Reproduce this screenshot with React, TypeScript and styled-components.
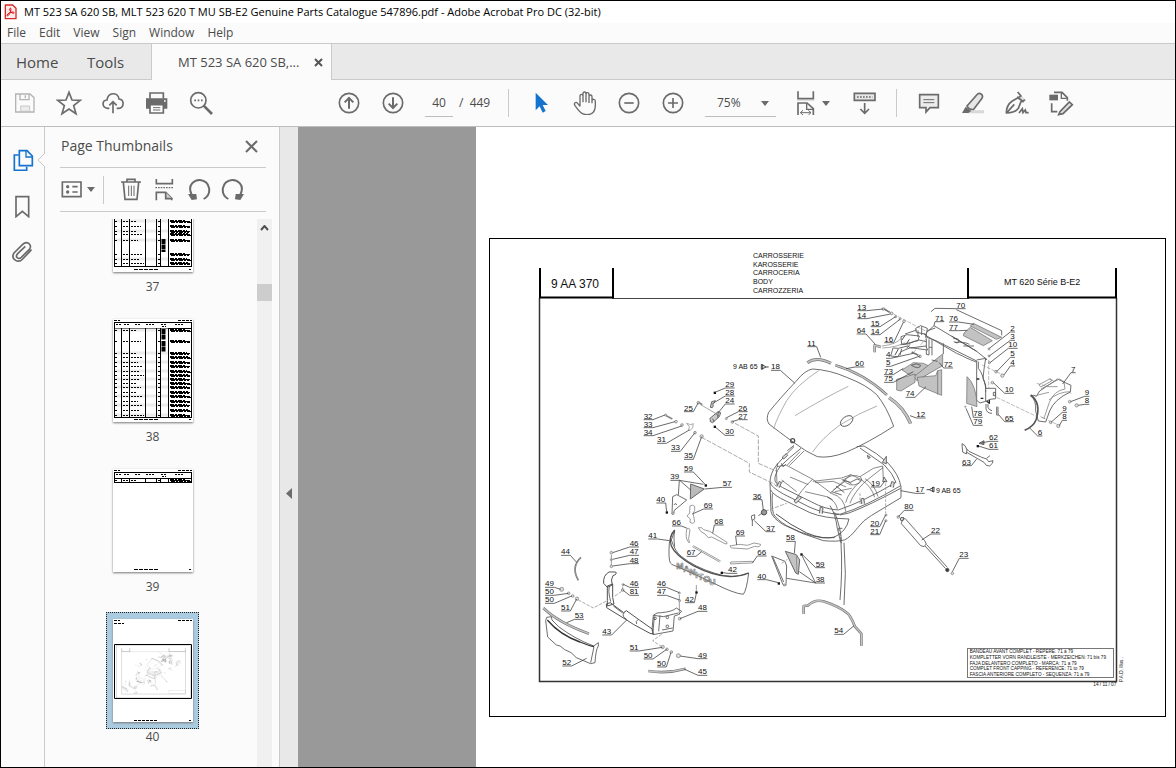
import React from 'react';
import styled, { createGlobalStyle } from 'styled-components';

const INK = '#6b6b6b';
const LINE = '#cacaca';
const PAPER = '#fbfbfb';

const GlobalStyle = createGlobalStyle`
  * { box-sizing: border-box; }
  body { margin: 0; background: ${PAPER}; }
  body, button, input, select { font-family: "Open Sans", "Noto Sans", sans-serif; }
  button { border: 0; padding: 0; background: none; color: inherit; }
  svg { display: block; }
`;

/* ---------- window chrome ---------- */

const Window = styled.div`
  height: 100vh;
  display: flex;
  flex-direction: column;
  border: 1px solid #000;
  background: ${PAPER};
  color: #4b4b4b;
  overflow: hidden;
`;

const TitleBar = styled.header`
  flex: none;
  display: flex;
  align-items: center;
  gap: 7px;
  height: 22px;
  padding-left: 3px;
  background: #fff;
`;

const Title = styled.h1`
  margin: 0;
  font-size: 11px;
  line-height: 20px;
  font-weight: 400;
  color: #000;
  white-space: nowrap;
`;

const MenuBar = styled.nav`
  flex: none;
  display: flex;
  align-items: center;
  gap: 13px;
  height: 21px;
  padding-left: 6px;
  border-bottom: 1px solid ${LINE};
`;

const MenuItem = styled.button`
  font-size: 12px;
  line-height: 18px;
`;

const TabBar = styled.div`
  flex: none;
  display: flex;
  height: 36px;
  background: #e9e9e9;
`;

const Tab = styled.button<{ $width: number }>`
  width: ${(p) => p.$width}px;
  font-size: 15px;
  line-height: 20px;
  text-align: left;
`;

const ActiveTab = styled.div`
  display: flex;
  align-items: center;
  justify-content: space-between;
  width: 181px;
  padding: 0 8px 0 26px;
  border: solid ${LINE};
  border-width: 0 1px;
  background: ${PAPER};
  font-size: 13px;
  line-height: 20px;
`;

const TabFill = styled.div`
  flex: 1;
  border-bottom: 1px solid ${LINE};
`;

const HomeTabs = styled.div`
  display: flex;
  width: 150px;
  padding-left: 15px;
  border-bottom: 1px solid ${LINE};
`;

const ToolBar = styled.div`
  flex: none;
  display: flex;
  align-items: center;
  height: 47px;
  padding-left: 2px;
  border-bottom: 1px solid #bdbdbd;
`;

const ToolGroup = styled.div<{ $before?: number }>`
  display: flex;
  align-items: center;
  margin-left: ${(p) => p.$before ?? 0}px;
`;

const ToolButton = styled.button<{ $width?: number }>`
  display: flex;
  align-items: center;
  justify-content: center;
  gap: 4px;
  width: ${(p) => p.$width ?? 44}px;
  height: 36px;
`;

const Separator = styled.span<{ $height?: number }>`
  width: 1px;
  height: ${(p) => p.$height ?? 28}px;
  background: ${LINE};
`;

const PageInput = styled.input`
  width: 28px;
  height: 28px;
  padding: 0;
  border: 0;
  border-bottom: 1px solid #bdbdbd;
  background: none;
  color: #4b4b4b;
  font-size: 12px;
  text-align: center;
`;

const PageTotal = styled.span`
  width: 55px;
  padding-left: 6px;
  font-size: 12px;
  line-height: 18px;
  white-space: pre;
`;

const ZoomBox = styled.div`
  position: relative;
  width: 71px;
  svg { position: absolute; right: 7px; top: 12px; pointer-events: none; }
`;

const ZoomSelect = styled.select`
  appearance: none;
  width: 100%;
  height: 28px;
  padding: 0 0 0 12px;
  border: 0;
  border-bottom: 1px solid #bdbdbd;
  border-radius: 0;
  background: none;
  color: #4b4b4b;
  font-size: 12px;
`;

/* ---------- side panel ---------- */

const Workspace = styled.div`
  flex: 1;
  min-height: 0;
  display: flex;
`;

const Rail = styled.nav`
  flex: none;
  width: 44px;
  display: flex;
  flex-direction: column;
  align-items: center;
  gap: 10px;
  padding-top: 15px;
  border-right: 1px solid ${LINE};
`;

const RailButton = styled.button`
  position: relative;
  display: flex;
  align-items: center;
  justify-content: center;
  width: 43px;
  height: 36px;
`;

const RailPointer = styled.svg`
  position: absolute;
  right: -1px;
  top: 8px;
`;

const Panel = styled.aside`
  flex: none;
  width: 235px;
  display: flex;
  flex-direction: column;
  padding-left: 15px;
  border-right: 1px solid ${LINE};
`;

const PanelHead = styled.div`
  display: flex;
  align-items: center;
  justify-content: space-between;
  height: 41px;
  margin-right: 13px;
  padding: 0 8px 2px 1px;
  border-bottom: 1px solid ${LINE};
`;

const PanelTitle = styled.h2`
  margin: 0;
  font-size: 14px;
  line-height: 20px;
  font-weight: 400;
`;

const PanelTools = styled.div`
  display: flex;
  align-items: center;
  height: 44px;
  margin-right: 13px;
  border-bottom: 1px solid ${LINE};
`;

const ThumbArea = styled.div`
  flex: 1;
  min-height: 0;
  display: flex;
  justify-content: space-between;
  margin-top: 7px;
  padding-right: 7px;
`;

const ThumbClip = styled.div`
  flex: 1;
  overflow: hidden;
`;

const ThumbList = styled.ol`
  list-style: none;
  margin: -57px 0 0;
  padding: 0 0 0 46px;
`;

const ThumbItem = styled.li`
  width: 93px;
  height: 150px;
  font-size: 12px;
  line-height: 16px;
  text-align: center;
`;

const ThumbFrame = styled.div<{ $selected: boolean }>`
  height: 117px;
  padding: 6px;
  border: 1px dotted ${(p) => (p.$selected ? '#222' : 'transparent')};
  background: ${(p) => (p.$selected ? '#abcbe0' : 'transparent')};
  > svg { background: #fff; box-shadow: 0 1px 2px #777; }
`;

const ScrollBar = styled.div`
  width: 15px;
  background: #f0f0f0;
`;

const ScrollArrow = styled.div`
  display: flex;
  justify-content: center;
  padding-top: 6px;
  height: 65px;
`;

const ScrollThumb = styled.div`
  height: 17px;
  background: #cdcdcd;
`;

const Collapse = styled.button`
  flex: none;
  display: flex;
  align-items: center;
  justify-content: center;
  width: 18px;
  padding-top: 92px;
  background: #e8e8e8;
`;

/* ---------- document ---------- */

const DocumentView = styled.main`
  flex: 1;
  min-width: 0;
  padding-left: 178px;
  background: #999;
  overflow: hidden;
`;

const Sheet = styled.div`
  height: 100%;
  padding: 111px 0 0 13px;
  background: #fff;
  overflow: hidden;
`;

/* ---------- icons (66-unit grid, three units to the pixel) ---------- */

type IconProps = { size?: number; color?: string; w?: number; children: React.ReactNode };
const Icon = ({ size = 22, color = INK, w = 5, children }: IconProps) => (
  <svg width={size} height={size} viewBox={`0 0 ${size * 3} ${size * 3}`} fill="none" stroke={color} strokeWidth={w} aria-hidden="true">
    {children}
  </svg>
);

const Caret = () => (
  <svg width="8" height="5" viewBox="0 0 8 5" aria-hidden="true"><path d="M0 0h8L4 5z" fill={INK} /></svg>
);

const AcrobatLogo = () => (
  <svg width="13" height="16" viewBox="0 0 39 48" fill="none" aria-hidden="true">
    <path d="M4 3h22l10 10v31H4z" fill="#fdecec" stroke="#d32a2a" strokeWidth="4" strokeLinejoin="round" />
    <path d="M9 34c3-7 9-10 19-10 3 1 3 4 0 4-6-1-11-6-11-13 1-4 4-3 4 0 0 8-5 19-11 21z" stroke="#d11" strokeWidth="3" />
  </svg>
);

const SaveIcon = () => (
  <Icon color="#b4b4b4" w={4}>
    <path d="M5 6h43l12 11v43H5z" /><path d="M18 6v17h27V6" /><path d="M34 10v9" />
    <path d="M20 58V42h27v16z" fill="#ececec" strokeWidth="2" />
  </Icon>
);
const StarIcon = () => (
  <Icon size={26} w={5}><path d="M39 7l9 23 25 1-20 16 7 24-21-14-21 14 7-24L5 31l25-1z" /></Icon>
);
const CloudIcon = () => (
  <Icon w={5}>
    <path d="M22 49h-5C-1 47-1 25 15 24 18 0 48-1 51 21c17 2 16 27-1 28h-6" />
    <path d="M33 64V31M22 40l11-11 11 11" />
  </Icon>
);
const PrintIcon = () => (
  <Icon w={4}>
    <path d="M12 20V3h40v17" strokeWidth="5" /><path d="M0 19h64v31h-12V39H12v11H0z" fill={INK} stroke="none" />
    <path d="M12 38h40v25H12z" fill="#fff" strokeWidth="5" /><path d="M21 47h22M21 54h22" strokeWidth="3" /><path d="M54 27h5" stroke="#fff" />
  </Icon>
);
const SearchIcon = () => (
  <Icon size={24} w={5}>
    <circle cx="28" cy="28" r="23" /><path d="M44 44l25 25" strokeWidth="8" />
    <path d="M16 28h5M26 28h5M36 28h5" strokeWidth="5" />
  </Icon>
);
const UpIcon = () => <Icon w={5}><circle cx="33" cy="33" r="29" /><path d="M33 50V19M20 31l13-13 13 13" strokeWidth="6" /></Icon>;
const DownIcon = () => <Icon w={5}><circle cx="33" cy="33" r="29" /><path d="M33 16v31M20 35l13 13 13-13" strokeWidth="6" /></Icon>;
const MinusIcon = () => <Icon w={5}><circle cx="33" cy="33" r="29" /><path d="M19 33h28" strokeWidth="5" /></Icon>;
const PlusIcon = () => <Icon w={5}><circle cx="33" cy="33" r="29" /><path d="M18 33h30M33 18v30" strokeWidth="5" /></Icon>;
const PointerIcon = () => <Icon><path d="M17 2l37 37H38l9 18-9 5-9-19-12 12z" fill="#1473cf" stroke="none" /></Icon>;
const HandIcon = () => (
  <Icon size={24} w={4}>
    <path
      d="M21 46V16c0-8 9-8 9 0v18M30 34V9c0-8 9-8 9 0v25M39 34V11c0-8 9-8 9 0v25M48 36V18c0-8 9-8 9 0v19M57 37v-7c0-7 10-7 10 1v12c0 18-8 28-25 28-18 0-23-10-36-27-5-8 3-13 8-7l7 9"
      strokeLinejoin="round"
    />
  </Icon>
);
const FitIcon = () => (
  <Icon size={24} w={5}>
    <path d="M12 1v22h46V1" /><path d="M9 28h52" strokeWidth="2" stroke="#c8c8c8" />
    <path d="M12 72V36h27l19 17v19" /><path d="M38 36v19h20" strokeWidth="4" />
    <path d="M20 65h30M27 58l-8 7 8 7M43 58l8 7-8 7" strokeWidth="3" />
  </Icon>
);
const KeyboardIcon = () => (
  <Icon size={24} w={5}>
    <path d="M4 7h62v21H4z" fill="#e6e6e6" /><path d="M12 18h46" strokeDasharray="5 4" strokeWidth="5" />
    <path d="M35 36v30M22 54l13 13 13-13" />
  </Icon>
);
const CommentIcon = () => (
  <Icon w={5}>
    <path d="M5 8h56v39H36L24 60V47H5z" fill="#ececec" /><path d="M16 23h33M16 32h33" strokeWidth="3" />
  </Icon>
);
const MarkerIcon = () => (
  <Icon size={24} w={5}>
    <path d="M26 58h43v9H18z" fill="#d8d8d8" stroke="none" />
    <path d="M18 45L47 12c8-10 24 0 15 11L38 55c-10 2-16-2-20-10z" fill="#e6e6e6" />
    <path d="M14 47l17 13-9 6H3z" fill={INK} stroke="none" />
  </Icon>
);
const SignIcon = () => (
  <Icon size={24} w={5}>
    <path d="M43 10l21 17-9 8-17-14z" fill="#dedede" stroke="none" />
    <path d="M38 3l10 12L22 30Q4 42 4 66q26 0 36-14l8-20 12-5M36 18l20 15M6 64l22-24" strokeLinejoin="round" />
    <path d="M42 66l10-13 2 12 7-8 2 8h8" strokeWidth="5" />
  </Icon>
);
const EditIcon = () => (
  <Icon size={26} w={5}>
    <path d="M4 14h26v17H4z" fill={INK} stroke="none" /><path d="M18 7h24l16 16v9" /><path d="M40 9v16h16" strokeWidth="4" />
    <path d="M11 40v25h17" /><path d="M36 65L64 36l9 8-28 27-13 3z" fill="#e0e0e0" strokeWidth="5" />
  </Icon>
);
const PagesIcon = () => (
  <Icon color="#1473cf" w={5}>
    <path d="M22 5h23l16 16v29H22z" /><path d="M42 5v19h18" strokeWidth="4" /><path d="M20 18H7v46h37V53" />
  </Icon>
);
const BookmarkIcon = () => <Icon size={24} w={5}><path d="M15 8h38v60L34 52 15 68z" /></Icon>;
const ClipIcon = () => (
  <Icon size={24} w={5}>
    <path d="M59 32L35 57C21 72-2 57 9 39L35 13C48 0 66 15 55 28L31 52C22 60 11 51 20 41L43 19M58 32l4-3" />
  </Icon>
);
const OptionsIcon = () => (
  <Icon w={5}>
    <path d="M4 9h56v44H4z" /><path d="M34 23h16M34 39h16" /><circle cx="20" cy="23" r="5" fill={INK} stroke="none" /><circle cx="20" cy="39" r="5" fill={INK} stroke="none" />
  </Icon>
);
const TrashIcon = () => (
  <Icon size={24} w={5}><path d="M6 12h60M24 11V4h24v7M13 13l5 51h36l5-51" /><path d="M29 23v31M37 23v31M45 23v31" strokeWidth="3" /></Icon>
);
const SplitIcon = () => (
  <Icon size={24} w={5}><path d="M10 3v14h48V3" /><path d="M7 29h54" strokeWidth="4" strokeDasharray="5 3" /><path d="M10 67V43h28l18 18v6" /><path d="M38 43v19h20" fill="#ccc" /></Icon>
);
const RotateIcon = ({ flip = false }: { flip?: boolean }) => (
  <Icon size={24} w={5}>
    <g transform={flip ? 'translate(72 0) scale(-1 1)' : undefined}>
      <path d="M14 50C-1 20 24 5 39 6c32 4 37 42 11 57" strokeWidth="6" /><path d="M3 48h25l2 16-16 2z" fill={INK} stroke="none" />
    </g>
  </Icon>
);

/* ---------- exploded drawing ---------- */

type Point = [number, number];
type Callout = [string, number, number, ...Point[]];

/* Each sheet zone has its own origin; coordinates inside run at three units to the pixel. */
const zone = (x: number, y: number) => `translate(${x} ${y}) scale(.33333)`;

const CALLOUTS: { at: Point; items: Callout[] }[] = [
  { at: [480, 230], items: [['11', 982, 350, [1022, 382]]] },
  {
    at: [830, 260],
    items: [
      ['13', 82, 152, [160, 147]], ['14', 82, 176, [182, 162]], ['15', 122, 200, [197, 170]], ['14', 122, 224, [210, 178]],
      ['64', 80, 222, [135, 252]], ['16', 163, 248, [220, 187]], ['4', 168, 295, [250, 280]], ['5', 168, 319, [270, 288]],
      ['73', 162, 344, [220, 325]], ['75', 162, 367, [250, 335]], ['74', 227, 412, [288, 380]], ['72', 341, 324, [328, 308]],
      ['71', 315, 185, [312, 197]], ['76', 357, 186, [432, 193]], ['77', 357, 212, [412, 211]],
      ['2', 541, 216, [478, 265]], ['3', 541, 241, [478, 288]], ['10', 535, 265, [480, 308]], ['5', 541, 292, [500, 335]],
      ['4', 541, 318, [522, 345]], ['7', 723, 338, [698, 372]], ['10', 524, 400, [490, 368]], ['9', 764, 409, [722, 425]],
      ['8', 764, 433, [745, 436]], ['9', 697, 457, [663, 487]], ['8', 697, 481, [688, 497]], ['6', 623, 528, [600, 505]],
      ['65', 524, 485, [505, 463]], ['78', 430, 472, [425, 440]], ['79', 430, 496, [408, 445]], ['12', 259, 474, [240, 467]],
      ['60', 75, 321, [48, 326]], ['62', 477, 544, [455, 549]], ['61', 477, 568, [445, 558]], ['63', 396, 617, [440, 597]],
      ['70', 379, 146, [315, 145], [303, 155]],
    ],
  },
  {
    at: [700, 350],
    items: [
      ['18', 213, 61, [285, 100]], ['29', 76, 114, [45, 127]], ['28', 76, 138, [42, 158]], ['24', 76, 162, [55, 188]],
      ['26', 115, 185, [80, 203]], ['27', 115, 209, [97, 215]], ['30', 75, 256, [47, 232]], ['57', 68, 412, [15, 417]],
      ['36', 158, 449, [190, 480]], ['37', 198, 545, [163, 512]], ['58', 258, 574, [283, 610]], ['59', 347, 653, [305, 612]],
      ['38', 347, 699, [298, 665]], ['40', 172, 689, [235, 698]], ['19', 513, 411, [555, 392]], ['17', 646, 430, [602, 422]],
      ['80', 613, 481, [595, 500]], ['20', 511, 530, [557, 495]], ['21', 511, 554, [557, 512]], ['22', 693, 552, [665, 570]],
      ['23', 778, 625, [757, 665]],
    ],
  },
  {
    at: [530, 370],
    items: [
      ['25', 462, 125, [505, 98]], ['32', 341, 149, [405, 135]], ['33', 341, 173, [435, 155]], ['34', 341, 197, [455, 168]],
      ['31', 381, 220, [478, 180]], ['33', 423, 244, [495, 188]], ['35', 462, 268, [515, 200]], ['59', 462, 306, [527, 345]],
      ['39', 421, 331, [482, 360]], ['40', 379, 399, [410, 425]], ['69', 521, 417, [487, 432]], ['66', 426, 468, [472, 475]],
      ['68', 553, 465, [548, 490]], ['41', 355, 507, [418, 512]], ['69', 617, 498, [620, 525]], ['67', 470, 559, [515, 545]],
      ['66', 682, 558, [668, 578]], ['42', 594, 610, [578, 608]],
    ],
  },
  {
    at: [530, 520],
    items: [
      ['44', 93, 106, [140, 127]], ['46', 299, 81, [248, 98]], ['47', 299, 106, [248, 118]], ['48', 299, 131, [248, 138]],
      ['46', 299, 202, [280, 193]], ['81', 299, 226, [278, 210]], ['46', 381, 202, [448, 218]], ['47', 381, 226, [448, 240]],
      ['42', 465, 248, [499, 220]], ['48', 504, 274, [450, 296]], ['49', 45, 202, [92, 208]], ['50', 45, 226, [115, 220]],
      ['50', 45, 250, [125, 228]], ['51', 93, 273, [140, 237]], ['53', 134, 298, [110, 308]], ['43', 217, 345, [290, 300]],
      ['52', 97, 438, [170, 415]], ['51', 299, 393, [397, 382]], ['50', 341, 417, [410, 388]], ['50', 381, 441, [423, 397]],
      ['49', 504, 416, [450, 408]], ['45', 504, 466, [462, 447]],
    ],
  },
  { at: [780, 480], items: [['54', 163, 463, [222, 437]]] },
];

const Callouts = () => (
  <g fontFamily='"Liberation Sans", Arial, sans-serif' fontSize="24" fill="#111">
    {CALLOUTS.map((z, i) => (
      <g key={i} transform={zone(z.at[0], z.at[1])}>
        {z.items.map(([text, x, y, ...to], j) => {
          const width = text.length * 14;
          const start = to[0][0] > x + width / 2 ? x + width : x;
          const other = start === x ? x + width : x;
          return (
            <g key={j}>
              <text x={x} y={y - 3}>{text}</text>
              <polyline points={[[other, y], [start, y], ...to].join(' ')} fill="none" stroke="#444" strokeWidth="2.4" />
            </g>
          );
        })}
      </g>
    ))}
  </g>
);

const Bolt = ({ x, y, r = 5 }: { x: number; y: number; r?: number }) => (
  <g fill="#ddd" stroke="#777" strokeWidth="2"><circle cx={x} cy={y} r={r - 1} /></g>
);
const Dot = ({ x, y }: { x: number; y: number }) => <path d={`M${x - 4} ${y - 3}h7v7h-7z`} fill="#111" stroke="none" />;
const Strip = ({ d, width = 10 }: { d: string; width?: number }) => (
  <g fill="none"><path d={d} stroke="#777" strokeWidth={width} /><path d={d} stroke="#c4c4c4" strokeWidth={width - 4} /></g>
);

const Parts = () => (
  <g fill="none" stroke="#505050" strokeWidth="2.5" strokeLinejoin="round">
    <g transform={zone(700, 350)}>
      {/* bonnet */}
      <path d="M206 187Q240 145 288 94Q315 60 338 57Q390 60 440 82Q500 105 530 134Q560 170 581 229Q505 278 440 306Q390 326 352 320Q320 307 282 278Q230 240 207 222Q197 207 206 187z" fill="#fff" />
      <path d="M356 62Q290 105 260 152Q230 205 221 236M445 109Q380 140 285 197M531 168Q475 190 420 225Q365 265 338 306" stroke="#888" strokeWidth="2" />
      <ellipse cx="440" cy="213" rx="21" ry="13" transform="rotate(-35 440 213)" />
      <circle cx="278" cy="272" r="6" strokeWidth="4" />
      {/* tray */}
      <path d="M282 290Q255 315 230 345Q210 370 210 397Q214 412 250 432L330 472Q370 490 420 493Q500 468 602 407Q597 375 565 340Q530 308 492 288L470 290" />
      <path d="M303 295Q265 325 240 350Q222 375 225 393Q230 405 262 420L335 456Q375 478 415 480Q490 455 588 397Q578 370 553 345L480 294" />
      <path d="M212 420Q220 436 260 454L330 488Q370 505 447 507Q440 545 400 563Q340 570 260 527Q225 505 220 490Q215 470 217 430" />
      <path d="M210 397L213 485Q218 505 250 524Q310 555 370 572Q410 576 433 570Q450 563 474 532Q490 510 515 496L603 443V407" />
      <path d="M228 492Q270 525 320 549Q370 570 405 561" strokeWidth="3" />
      <path d="M420 495L447 489Q510 465 602 415" />
      {/* inner mouldings */}
      <path d="M232 350L258 345L338 388L394 430Q435 442 437 485M338 388Q320 402 292 440L285 455M229 352L231 400M252 393L225 407M315 425L380 440Q410 455 412 478M245 390L290 425M270 381L325 404M300 305L262 345M312 303L268 347" strokeWidth="2" />
      <path d="M338 394L425 384L453 374L487 390M390 430L453 374M400 420L438 392L455 402M480 380L520 355L548 348L550 390M437 458Q445 425 485 390M450 460Q460 430 495 395L550 352M485 390Q515 410 524 442M495 386Q525 405 534 440M430 390Q450 414 477 400Q490 388 480 380Q455 370 430 390M405 425L455 415M345 398L400 394L438 411" strokeWidth="2" />
      <path d="M425 389l26 8 20-10 10 4M382 440l16 10M395 425l30 10M408 408l25 20" />
      <path d="M247 321l12-10 4 5-12 11zM547 337l12-18v22zM502 316l9 6-6 4zM571 411l4-16 8 2-3 16M548 395l4-14 9 14zM358 490l3-20 8 4-2 17M485 462l-2-15 8-2 3 16M282 453l16-14 7 4-17 17zM230 410l8-16 6 4-6 15" fill="#ddd" />
      <path d="M262 302l20-16M244 340l5 10 8-6M232 340v12" />
      {/* stay */}
      <path d="M390 467Q406 490 412 535L423 580Q428 660 420 750M404 487Q424 540 424 573M432 578Q440 670 432 765M408 493h10M415 535h12" />
      <path d="M415 535Q422 560 425 580" strokeDasharray="8 5" />
      {/* gas strut */}
      <path d="M606 513l9-8 59 67 5 10-7 8-10-3-58-66z" fill="#fff" /><path d="M675 588l62 68M680 584l62 68M602 510l10-8" />
      <circle cx="742" cy="660" r="5" fill="#333" /><circle cx="606" cy="507" r="5" fill="#ccc" />
      <Bolt x={595} y={501} /><Bolt x={757} y={670} /><Bolt x={558} y={495} r={4} /><Bolt x={558} y={512} r={4} />
      <path d="M557 400V490M480 430V462" stroke="#999" strokeDasharray="8 4" />
      {/* deflector */}
      <path d="M215 618l40 16 5 14-2 58-9-2zM219 622l32 74" fill="#fff" />
      <path d="M256 604l33 10 10 16-4 43-8-4z" fill="#c4c4c4" /><path d="M289 615l2 56" stroke="#888" />
      <Dot x={305} y={613} /><Dot x={237} y={700} /><Bolt x={253} y={705} r={4} />
      <path d="M305 615L347 699L260 685" strokeWidth="2.4" />
      <path d="M195 484L260 460M245 640L262 628" stroke="#999" strokeDasharray="12 4" />
      <circle cx="192" cy="487" r="8" fill="#999" strokeWidth="3" /><path d="M154 498l10-4v13l-8 4zM157 510v18M175 497l12-8" />
      {/* hinge */}
      <path d="M38 160l2 8-3 5-6-1 4-17 11-3-6 10M30 205l24-20 8 3-4 12-20 18-7-3z" fill="#ccc" />
      <path d="M45 190l12 8M38 206l4 10M55 185l-2 18" />
      <Dot x={45} y={128} /><Dot x={45} y={230} /><Bolt x={79} y={206} r={4} /><Bolt x={97} y={216} />
      <path d="M105 220L175 258V340L228 363M5 262L148 340V366L225 403" stroke="#999" strokeDasharray="14 4" />
      {/* seals */}
      <Strip d="M322 38Q350 18 393 40" width={9} /><Strip d="M406 46Q490 70 561 135" width={8} /><Strip d="M567 143Q610 170 632 221" />
      <path d="M184 43v15l14-7zM188 43v15M198 51h8" stroke="#222" /><path d="M702 411v15l-14-7zM698 411v15M688 419h-8" stroke="#222" />
    </g>

    <g transform={zone(830, 260)}>
      {/* front capping */}
      <path d="M285 222L312 197L440 274L470 298L440 303L318 242L290 232z" fill="#fff" />
      <path d="M292 212l24-8M440 274L365 228M370 236h12l6 8-7 5-10-4M375 247Q405 245 418 253M400 258h32M380 280l18 8q5 4 40 18M290 228L380 280M440 303L470 298M340 250v32M289 235v48l8 2v-47M306 240v46M298 262l8 0" />
      <path d="M257 205l15-8 20 8-3 18-30-6zM213 230l18-6 37 4-4 14-10 2-20 8-19 2zM264 211v20M275 200v25M225 222l35-12M289 245l-22-5-26 8-30 6M182 288l7-24 16 1 28-7 9 6 45-6 6 12-52-7-28 12-10 15zM230 265l10-12M215 266l-5 20" fill="#fff" />
      <path d="M216 240l8-12M230 250l8-12M195 285l10-18M282 222l8 3-4 8" strokeWidth="3" />
      <path d="M440 300l27-5-5 33-3 27 8 20v20M440 303v118l10 8 17-5V390M445 305v20q14 15 23 62M467 385h30v31l-17 2-13 6M490 397l6 0v10h-6z" fill="#fff" />
      <path d="M440 357h8M452 415h8M478 420v10l-8-6" stroke="#222" strokeWidth="4" />
      <path d="M476 300V385M500 412L625 472M456 315L520 345M162 147L290 215M250 278L290 235M620 370L725 400M640 475L690 497" stroke="#999" strokeDasharray="12 4" strokeWidth="2" />
      {/* padded panels */}
      <g fill="#c2c2c2" stroke="#666" strokeWidth="2">
        <path d="M216 330l34-22 30 2 34 16-34 24-36-2z" /><path d="M252 350l86-68v35l-78 45z" /><path d="M200 358l55-16v25l-42 26-13-3z" />
        <path d="M262 352l55-5 6-15 12-3v77l-68-28zM323 332v72" />
        <path d="M430 190l85 42-16 6-78-40zM402 219l19-17 66 40-27 15-60-30z" />
        <path d="M411 350Q440 375 441 440l-31-10z" />
      </g>
      <path d="M244 316q14-9 28 0-4 14-28 0zM305 300l18 4" />
      <path d="M379 149L515 212V226" />
      {/* side fairing */}
      <path d="M602 408q10-5 17 1l10-16 54-36 10 5 30 14-2 20q-48 22-62 57l-12 33-22-3-8-30q2-35-15-45" fill="#fff" />
      <path d="M633 387l55-30 14 8 3 22q-33 5-47 40l-16 48M617 407q25-7 40-10M657 420Q685 395 722 395M650 380l33 0M627 374l34-18 4 7-33 18zM658 357l12 5M632 470l14 7" stroke="#888" />
      <path d="M602 405Q635 430 618 480Q610 500 584 511" stroke="#555" strokeWidth="5" />
      <Strip d="M134 277V256L153 261" width={8} /><path d="M156 258Q200 253 213 235M157 264Q200 262 224 248" stroke="#999" />
      <path d="M500 440v26M504 440v28M468 432v14q2 14 18 14M474 432v10q2 8 12 10" />
      {/* bracket */}
      <path d="M396 551l9 6 6 12-2 13-11-6zM409 566l8 8 38 18 15 5 6 8 13-3-2 8-8 8-10-2-7-9-52-30M470 595l10-8" fill="#fff" />
      <Dot x={444} y={558} /><path d="M447 550l15-8v12z" fill="#999" />
      <Bolt x={160} y={147} /><Bolt x={185} y={160} /><Bolt x={197} y={170} r={4} /><Bolt x={210} y={177} r={4} /><Bolt x={222} y={184} />
      <path d="M163 147l16 10M245 276l20 10" strokeWidth="5" stroke="#777" /><Bolt x={270} y={289} />
      <Bolt x={477} y={267} r={4} /><Bolt x={477} y={288} r={4} /><Bolt x={478} y={308} r={4} /><Bolt x={498} y={335} /><Bolt x={517} y={347} r={6} />
      <Bolt x={487} y={368} /><Bolt x={719} y={425} /><Bolt x={740} y={436} r={6} /><Bolt x={662} y={487} /><Bolt x={685} y={498} r={6} /><Bolt x={406} y={440} r={3} />
    </g>

    <g transform={zone(530, 370)}>
      <Bolt x={407} y={135} r={4} /><path d="M409 137l18 10M505 97l12 7" strokeWidth="5" stroke="#888" /><Bolt x={505} y={98} />
      <Bolt x={438} y={155} /><Bolt x={456} y={165} /><Bolt x={495} y={188} /><Bolt x={515} y={199} r={6} />
      <path d="M470 160l12 4 8-3-2 12-8 9-4-2 2-10zM512 104L570 138" stroke="#999" />
      {/* left deflector */}
      <path d="M426 432l2-52 12-6 30 16-38 32v8zM432 405q2-8 9-1" fill="#fff" /><path d="M482 342l41 15-42 30z" fill="#bbb" />
      <path d="M448 331L445 375M448 331L520 343" /><Dot x={528} y={346} /><Dot x={411} y={427} /><Bolt x={429} y={431} r={4} />
      {/* foam strips */}
      <path d="M480 408q8-6 14 1v13q-9 8-3 16l3 18q-4 8-14 1l1-10-10-9 8-9zM470 478q8-8 10 2l-4 25 2 14-5-6q-7-10-3-35zM505 473q10-3 16 6l18 5 52 33q2 8-6 4l-40-20-10 2-10-11q-14-5-20-19zM490 527l82 46M487 530l82 46M604 527l26-4 22 3 20-7 20 4q0 10-18 6l-22 8-45-3q-6 0-7-7zM602 576l64-2q8 2 0 5l-30 1-34 2z" stroke="#888" />
      {/* grille */}
      <path d="M434 482Q417 495 417 540Q416 580 425 583Q490 610 552 640Q610 670 640 673Q650 660 656 609Q605 628 555 610Q495 592 455 560Q435 545 424 510L434 482" fill="#fff" />
      <path d="M434 480Q415 500 424 528Q435 555 490 587Q550 618 600 620Q630 620 656 609" strokeWidth="4" />
      <path d="M434 484Q430 500 434 530" /><Dot x={576} y={608} />
      <text x="439 460 478 496 504 520 538" y="597 606 615 624 629 637 646" fontFamily='"Liberation Sans", Arial, sans-serif' fontWeight="700" fontSize="26" strokeWidth="2" stroke="#777">MANITOU</text>
    </g>

    <g transform={zone(530, 520)}>
      <path d="M499 195v20" stroke="#888" /><Dot x={500} y={217} /><Strip d="M153 112Q122 140 145 181" width={5} />
      <Bolt x={244} y={98} /><Bolt x={244} y={119} r={4} /><Bolt x={244} y={139} r={5} /><path d="M244 104v32M448 225v60M278 200v10" stroke="#888" />
      <Bolt x={279} y={194} r={4} /><Bolt x={278} y={210} /><Bolt x={448} y={219} r={4} /><Bolt x={449} y={242} r={4} /><Bolt x={449} y={296} r={5} />
      {/* frame */}
      <path d="M221 190q-2-24 16-34l20 0q6 6-8 11-8 12-2 28l-15 7zM232 198l16-6v40l4 20-20 6zM229 252l12-4 40 30 8-6 39 28 40 28 2 14-10-2-50-27-20-13-60-37z" fill="#fff" strokeWidth="3" />
      <path d="M370 286q10-10 24-8 34-3 45-14l16 10-10 10-12 4-4 45-60 11-3-16zM373 290l-4 44M390 286l-4 48M396 330l32-6M250 258l28 21M240 197q-8 10 2 48M283 277q-10 12 8 22M325 298q-10 6-5 14M370 286l30 4 45-11" />
      <circle cx="412" cy="292" r="4" /><circle cx="412" cy="319" r="4" /><circle cx="375" cy="295" r="4" />
      <path d="M145 240L190 264L235 240M395 343L368 362L395 380M255 228L275 214" stroke="#999" strokeDasharray="10 4" />
      <Bolt x={95} y={208} r={7} /><Bolt x={116} y={220} /><Bolt x={128} y={228} /><Bolt x={141} y={236} r={6} />
      <Bolt x={398} y={381} r={6} /><Bolt x={411} y={388} /><Bolt x={424} y={396} /><Bolt x={445} y={407} r={7} />
      {/* bumper */}
      <Strip d="M40 264Q85 308 177 341" width={8} /><Strip d="M355 453Q410 462 467 446" width={8} />
      <path d="M47 302l3-10 14-2 2 10 20 20q45 35 105 58l14-10v10q-8 12-10 50l-13 3-43-18q-14-18-35-24-15-15-25-14l-26-24z" fill="#fff" />
      <path d="M52 300Q90 345 150 366Q180 378 192 380" stroke="#333" strokeWidth="4" /><path d="M192 380l-10 48" />
    </g>

    <g transform={zone(780, 480)}>
      <Strip d="M71 402V378L83 377Q105 357 130 364Q180 380 205 402Q215 415 225 440L244 461V498" width={8} />
    </g>
  </g>
);

const SheetLines = () => (
  <g fill="none" stroke="#111">
    <rect x="489.500" y="238.500" width="676" height="478" stroke="#000" />
    <path d="M539.500 298V681.500H1116.500V298" stroke="#333" strokeWidth="1.500" /><path d="M612 298.500h357" stroke="#444" />
    <path d="M540 268v29.500h73V268M968 268v29.500h148V268" stroke="#000" strokeWidth="2" />
    <rect x="967.500" y="648.500" width="146" height="29" stroke="#777" />
  </g>
);

const HEADINGS = ['CARROSSERIE', 'KAROSSERIE', 'CARROCERIA', 'BODY', 'CARROZZERIA'];
const NOTES = [
  'BANDEAU AVANT COMPLET - REPERE: 71 à 79',
  'KOMPLETTER VORN RANDLEISTE - MERKZEICHEN: 71 bis 79',
  'FAJA DELANTERO COMPLETO - MARCA: 71 a 79',
  'COMPLET FRONT CAPPING - REFERENCE: 71 to 79',
  'FASCIA ANTERIORE COMPLETO - SEQUENZA: 71 a 79',
];

const Drawing = () => (
  <svg width="677" height="479" viewBox="489 238 677 479" role="img" aria-label="Body, exploded view">
    <SheetLines />
    <Parts />
    <Callouts />
    <g fontFamily='"Liberation Sans", Arial, sans-serif' fill="#111">
      <text x="551" y="288" fontSize="12">9 AA 370</text>
      <text x="1004" y="285" fontSize="9">MT 620 Série B-E2</text>
      <g fontSize="7">
        {HEADINGS.map((t, i) => <text key={t} x="753" y={258 + Math.round(i * 8.7)}>{t}</text>)}
        <text x="733" y="369">9 AB 65</text>
        <text x="936" y="493">9 AB 65</text>
      </g>
      <g transform={zone(780, 480)} fontSize="14">
        {NOTES.map((t, i) => <text key={t} x="569" y={520 + i * 17}>{t}</text>)}
        <text x="940" y="619">14 / 11 / 07</text>
        <text transform="translate(1028 606) rotate(-90)">P.A.D.  Illus .</text>
      </g>
    </g>
  </svg>
);

/* ---------- thumbnails ---------- */

const COLUMNS = [9, 17, 33, 44, 48, 56];

const PartsTable = ({ top, bottom, rows, block }: { top: number; bottom: number; rows: number[]; block?: Point[] }) => (
  <g stroke="#000" fill="none">
    <path d="M1 1.500h6M65 1.500h14" strokeDasharray="3 1" />
    <path d="M3 5.500h5M11 5.500h5M22 5.500h6M33 5.500h9M48 5.500h6M62 5.500h8M49 7.500h4" strokeDasharray="2 1" />
    <path d="M1 3.500h78M1 9.500h78" />
    {rows.map((y, i) => (
      <g key={y}>
        {i % 2 === 0 && bottom > 20 && <path d={`M2 ${y}h54`} stroke="#ececec" strokeWidth="3" />}
        <path d={`M2 ${y + 0.5}h2M10 ${y + 0.5}h5M18 ${y + 0.5}h${5 + ((i * 5) % 9)}M45 ${y + 0.5}h2`} strokeDasharray="2 1" />
        <path d={`M57 ${y + 0.5}h20`} />
        <path d={`M57 ${y - 0.5}h${15 + (i % 4)}M58 ${y + 1.5}h${20 - (i % 3)}`} strokeDasharray="4 1 2 1" />
      </g>
    ))}
    {block?.map(([a, b]) => <path key={a} d={`M50.500 ${a}V${b}`} strokeWidth="4" strokeDasharray="5 .5" />)}
    <path d={`M1.500 ${top}V${bottom}M78.500 ${top}V${bottom}M1 ${bottom - 0.5}h78` + COLUMNS.map((x) => `M${x - 0.5} 9V${bottom}`).join('')} />
    <path d="M21 100.500h24M76 100.500h2" strokeDasharray="4 1" />
  </g>
);

const ThumbPage = ({ page }: { page: number }) => (
  <svg width="80" height="103" viewBox="0 0 80 103" role="img" aria-label={`Page ${page}`}>
    {page === 37 && <PartsTable top={3} bottom={98} rows={[52, 57, 62, 65, 71, 85, 90, 94]} block={[[70, 83]]} />}
    {page === 38 && (
      <PartsTable top={3} bottom={99} rows={[11, 22, 34, 38, 43, 47, 52, 56, 60, 64, 68, 73, 77, 82, 86, 91, 96]} block={[[10, 21], [22, 33]]} />
    )}
    {page === 39 && <PartsTable top={3} bottom={14} rows={[11]} />}
    {page === 40 && (
      <>
        <svg x="2" y="26" width="77" height="53" viewBox="489 238 677 479"><SheetLines /><Parts /></svg>
        <path d="M1.500 25.500h77v54h-77z" fill="none" stroke="#000" />
        <path d="M1 1.500h6M65 1.500h14M1 4.500h10M21 101.500h24M76 101.500h2" stroke="#000" strokeDasharray="3 1" />
      </>
    )}
  </svg>
);

const tools: [string, React.ComponentType][][] = [
  [['Save', SaveIcon], ['Star', StarIcon], ['Share', CloudIcon], ['Print', PrintIcon], ['Find', SearchIcon]],
  [['Previous page', UpIcon], ['Next page', DownIcon]],
  [['Select', PointerIcon], ['Pan', HandIcon], ['Zoom out', MinusIcon], ['Zoom in', PlusIcon]],
  [['Comment', CommentIcon], ['Highlight', MarkerIcon], ['Sign', SignIcon], ['Edit', EditIcon]],
];

const Tools = ({ set, before }: { set: number; before?: number }) => (
  <ToolGroup $before={before}>
    {tools[set].map(([label, Glyph]) => (
      <ToolButton key={label} aria-label={label}><Glyph /></ToolButton>
    ))}
  </ToolGroup>
);

export default function App() {
  return (
    <Window>
      <GlobalStyle />
      <TitleBar>
        <AcrobatLogo />
        <Title>MT 523 SA 620 SB, MLT 523 620 T MU SB-E2 Genuine Parts Catalogue 547896.pdf - Adobe Acrobat Pro DC (32-bit)</Title>
      </TitleBar>
      <MenuBar>
        {['File', 'Edit', 'View', 'Sign', 'Window', 'Help'].map((m) => <MenuItem key={m}>{m}</MenuItem>)}
      </MenuBar>
      <TabBar>
        <HomeTabs>
          <Tab $width={71}>Home</Tab>
          <Tab $width={60}>Tools</Tab>
        </HomeTabs>
        <ActiveTab>
          MT 523 SA 620 SB,...
          <button aria-label="Close tab">
            <svg width="9" height="9" viewBox="0 0 9 9"><path d="M1 1l7 7M8 1L1 8" stroke="#555" strokeWidth="2" /></svg>
          </button>
        </ActiveTab>
        <TabFill />
      </TabBar>
      <ToolBar>
        <Tools set={0} />
        <Tools set={1} before={104} />
        <ToolGroup $before={10}>
          <PageInput aria-label="Page number" defaultValue="40" />
          <PageTotal>/  449</PageTotal>
          <Separator />
        </ToolGroup>
        <Tools set={2} before={10} />
        <ToolGroup $before={10}>
          <ZoomBox>
            <ZoomSelect aria-label="Zoom level" defaultValue="75%"><option>75%</option></ZoomSelect>
            <Caret />
          </ZoomBox>
        </ToolGroup>
        <ToolGroup $before={14}>
          <ToolButton aria-label="Fit width"><FitIcon /><Caret /></ToolButton>
          <ToolButton aria-label="Show keyboard tools" $width={62}><KeyboardIcon /></ToolButton>
          <Separator />
        </ToolGroup>
        <Tools set={3} before={10} />
      </ToolBar>
      <Workspace>
        <Rail>
          <RailButton aria-label="Page thumbnails">
            <PagesIcon />
            <RailPointer width="8" height="20" viewBox="0 0 8 20"><path d="M8 0v3L1 10l7 7v3" fill="#fbfbfb" stroke={LINE} /></RailPointer>
          </RailButton>
          <RailButton aria-label="Bookmarks"><BookmarkIcon /></RailButton>
          <RailButton aria-label="Attachments"><ClipIcon /></RailButton>
        </Rail>
        <Panel>
          <PanelHead>
            <PanelTitle>Page Thumbnails</PanelTitle>
            <button aria-label="Close panel">
              <svg width="13" height="13" viewBox="0 0 13 13"><path d="M1 1l11 11M12 1L1 12" stroke={INK} strokeWidth="2" /></svg>
            </button>
          </PanelHead>
          <PanelTools>
            <ToolButton aria-label="Options" $width={36}><OptionsIcon /><Caret /></ToolButton>
            <ToolGroup $before={7}><Separator /></ToolGroup>
            <ToolGroup $before={10}>
              <ToolButton aria-label="Delete pages" $width={34}><TrashIcon /></ToolButton>
              <ToolButton aria-label="Split pages" $width={34}><SplitIcon /></ToolButton>
              <ToolButton aria-label="Rotate left" $width={34}><RotateIcon /></ToolButton>
              <ToolButton aria-label="Rotate right" $width={34}><RotateIcon flip /></ToolButton>
            </ToolGroup>
          </PanelTools>
          <ThumbArea>
            <ThumbClip>
              <ThumbList>
                {[37, 38, 39, 40].map((page) => (
                  <ThumbItem key={page}>
                    <ThumbFrame $selected={page === 40}><ThumbPage page={page} /></ThumbFrame>
                    {page}
                  </ThumbItem>
                ))}
              </ThumbList>
            </ThumbClip>
            <ScrollBar>
              <ScrollArrow>
                <svg width="9" height="6" viewBox="0 0 9 6"><path d="M1 5l3.500-4L8 5" fill="none" stroke="#505050" strokeWidth="2" /></svg>
              </ScrollArrow>
              <ScrollThumb />
            </ScrollBar>
          </ThumbArea>
        </Panel>
        <Collapse aria-label="Collapse panel">
          <svg width="6" height="11" viewBox="0 0 6 11"><path d="M6 0v11L0 5.500z" fill={INK} /></svg>
        </Collapse>
        <DocumentView>
          <Sheet><Drawing /></Sheet>
        </DocumentView>
      </Workspace>
    </Window>
  );
}
